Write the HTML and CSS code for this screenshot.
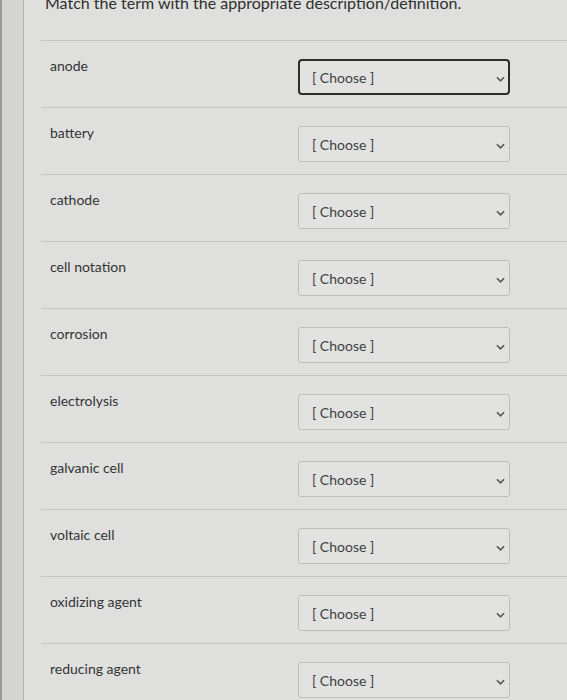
FILE: index.html
```html
<!DOCTYPE html>
<html>
<head>
<meta charset="utf-8">
<link rel="stylesheet" href="styles.css">
</head>
<body>
<div class="page">
  <div class="gutter"></div>
  <div class="content">
    <p class="title">Match the term with the appropriate description/definition.</p>
    <div class="rows">
      <div class="row"><div class="term">anode</div><div class="select focused"><span>[ Choose ]</span><svg class="chev" viewBox="0 0 10 6"><path d="M1 1l4 4 4-4"/></svg></div></div>
      <div class="row"><div class="term">battery</div><div class="select"><span>[ Choose ]</span><svg class="chev" viewBox="0 0 10 6"><path d="M1 1l4 4 4-4"/></svg></div></div>
      <div class="row"><div class="term">cathode</div><div class="select"><span>[ Choose ]</span><svg class="chev" viewBox="0 0 10 6"><path d="M1 1l4 4 4-4"/></svg></div></div>
      <div class="row"><div class="term">cell notation</div><div class="select"><span>[ Choose ]</span><svg class="chev" viewBox="0 0 10 6"><path d="M1 1l4 4 4-4"/></svg></div></div>
      <div class="row"><div class="term">corrosion</div><div class="select"><span>[ Choose ]</span><svg class="chev" viewBox="0 0 10 6"><path d="M1 1l4 4 4-4"/></svg></div></div>
      <div class="row"><div class="term">electrolysis</div><div class="select"><span>[ Choose ]</span><svg class="chev" viewBox="0 0 10 6"><path d="M1 1l4 4 4-4"/></svg></div></div>
      <div class="row"><div class="term">galvanic cell</div><div class="select"><span>[ Choose ]</span><svg class="chev" viewBox="0 0 10 6"><path d="M1 1l4 4 4-4"/></svg></div></div>
      <div class="row"><div class="term">voltaic cell</div><div class="select"><span>[ Choose ]</span><svg class="chev" viewBox="0 0 10 6"><path d="M1 1l4 4 4-4"/></svg></div></div>
      <div class="row"><div class="term">oxidizing agent</div><div class="select"><span>[ Choose ]</span><svg class="chev" viewBox="0 0 10 6"><path d="M1 1l4 4 4-4"/></svg></div></div>
      <div class="row"><div class="term">reducing agent</div><div class="select"><span>[ Choose ]</span><svg class="chev" viewBox="0 0 10 6"><path d="M1 1l4 4 4-4"/></svg></div></div>
    </div>
  </div>
</div>
</body>
</html>
```

FILE: styles.css
```css
html, body {
  margin: 0;
  padding: 0;
  height: 100%;
  overflow: hidden;
}
body {
  background: #dfe0de;
  font-family: Lato, "Open Sans", sans-serif;
  color: #3c3d3c;
}
.page {
  display: flex;
  min-height: 700px;
}
.gutter {
  width: 24px;
  flex: none;
  background: #d5d6d4;
  border-left: 2px solid #9a9b99;
  border-right: 1px solid #b4b5b3;
  box-sizing: border-box;
}
.content {
  flex: 1;
  padding-left: 17px;
}
.title {
  margin: -7px 0 0 4px;
  font-size: 16px;
  line-height: 20px;
  color: #2f302f;
  height: 47px;
}
.row {
  border-top: 1px solid #c4c5c3;
  display: flex;
  align-items: flex-start;
  padding: 18px 0 12px 0;
  height: 36px;
}
.term {
  width: 248px;
  padding-left: 9px;
  margin-top: -3px;
  font-size: 14px;
  line-height: 20px;
  color: #333433;
}
.select {
  width: 212px;
  height: 36px;
  box-sizing: border-box;
  border: 1px solid #bdbebc;
  border-radius: 3px;
  background: #e2e3e1;
  display: flex;
  align-items: center;
  justify-content: space-between;
  padding: 0 4px 0 13px;
  font-size: 14px;
  color: #404140;
}
.select.focused {
  border: 2px solid #2c2d2c;
  border-radius: 4px;
  padding-left: 12px;
  padding-right: 3px;
}
.chev {
  width: 9px;
  height: 6px;
  fill: none;
  stroke: #555655;
  stroke-width: 1.8;
  margin-top: 3px;
}
```
